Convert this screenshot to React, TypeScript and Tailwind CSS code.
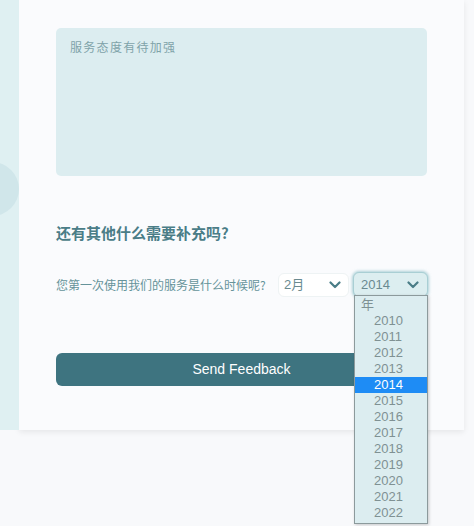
import React from "react";

const years = ["2010","2011","2012","2013","2014","2015","2016","2017","2018","2019","2020","2021","2022"];

function Chevron({ className }: { className?: string }) {
  return (
    <svg width="12" height="8" viewBox="0 0 12 8" className={className}>
      <path d="M1.5 1.5 L6 6 L10.5 1.5" fill="none" stroke="#4a7d87" strokeWidth="2.2" strokeLinecap="round" strokeLinejoin="round" />
    </svg>
  );
}

export default function App() {
  return (
    <div className="relative w-[474px] h-[526px] overflow-hidden bg-[#f8f9fb]" style={{ fontFamily: '"Noto Sans CJK SC", "Liberation Sans", sans-serif' }}>
      <div className="flex h-[430px]">
        <div className="relative w-[19px] shrink-0 bg-[#dff0f2] overflow-hidden">
          <div className="absolute left-[-35px] top-[162px] w-[54px] h-[54px] rounded-full bg-[#d0e6ea]" />
        </div>
        <div className="w-[445px] shrink-0 bg-[#fafbfd] shadow-[0_2px_6px_rgba(0,0,0,0.08)] pl-[37px] pt-[28px]">
          <div className="w-[371px] h-[148px] rounded-[5px] bg-[#dcedf0] px-[14px] pt-[11px]">
            <div className="text-[12px] leading-[16px] tracking-[1.3px] text-[#7fa3a9]">服务态度有待加强</div>
          </div>
          <div className="mt-[47px] text-[15px] leading-[20px] font-bold text-[#4a7d87]">还有其他什么需要补充吗?</div>
          <div className="mt-[29px] flex items-center h-[25px]">
            <div className="w-[222px] text-[12px] text-[#65939a]">您第一次使用我们的服务是什么时候呢?</div>
            <div className="flex items-center justify-between w-[71px] h-[24px] rounded-[6px] bg-white border border-[#eef3f4] pl-[5px] pr-[7px]">
              <span className="text-[13px] text-[#6a8a90]" style={{ fontFamily: '"Liberation Sans", "Noto Sans CJK SC", sans-serif' }}>2月</span>
              <Chevron />
            </div>
            <div className="ml-[4px] flex items-center justify-between w-[75px] h-[25px] rounded-[6px] bg-[#dceef0] border border-[#a9cfd4] shadow-[0_0_3px_1px_rgba(120,180,190,0.6)] pl-[7px] pr-[8px]">
              <span className="text-[13px] text-[#6a8a90]" style={{ fontFamily: '"Liberation Sans", sans-serif' }}>2014</span>
              <Chevron />
            </div>
          </div>
          <div className="mt-[56px] w-[371px] h-[33px] rounded-[6px] bg-[#3e7480] flex items-center justify-center text-white text-[14px]" style={{ fontFamily: '"Liberation Sans", sans-serif' }}>
            Send Feedback
          </div>
        </div>
      </div>
      <div className="absolute left-[354px] top-[295px] w-[74px] h-[229px] border border-[#8c9a9c] bg-[#dcedf0] shadow-[1px_1px_3px_rgba(0,0,0,0.2)] pt-[1px]" style={{ fontFamily: '"Liberation Sans", "Noto Sans CJK SC", sans-serif' }}>
        <div className="h-[16px] leading-[16px] pl-[6px] text-[13px] text-[#7f9193]">年</div>
        {years.map((y) => (
          <div key={y} className={y === "2014" ? "h-[16px] leading-[16px] pl-[19px] text-[13px] bg-[#1e8cf5] text-white" : "h-[16px] leading-[16px] pl-[19px] text-[13px] text-[#7f9193]"}>
            {y}
          </div>
        ))}
      </div>
    </div>
  );
}
